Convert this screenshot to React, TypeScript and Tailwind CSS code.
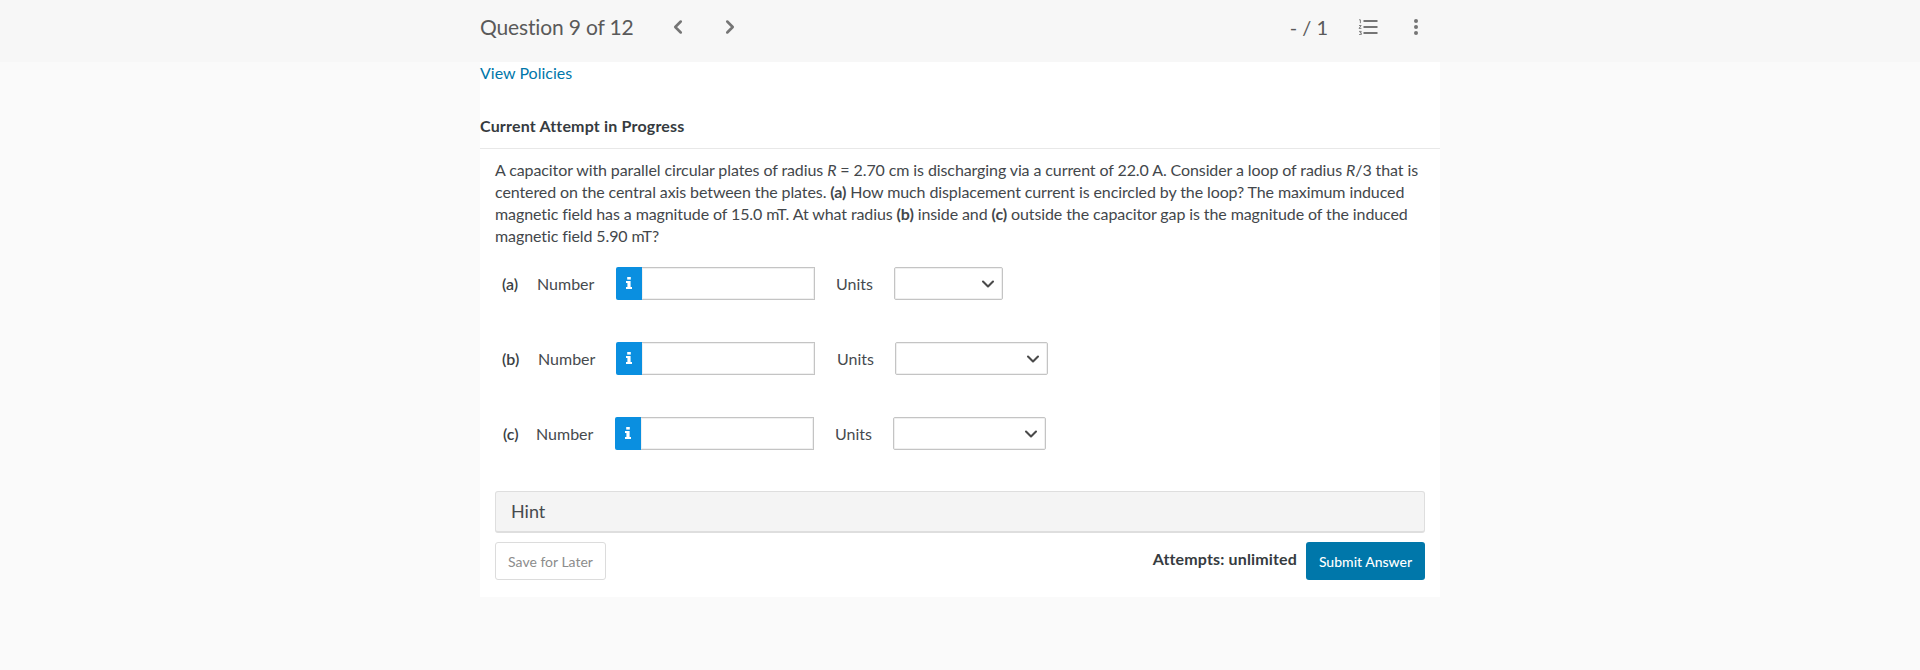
import { ChevronDown, ChevronLeft, ChevronRight } from "lucide-react";

function ListIcon() {
  return (
    <svg width="20" height="16" viewBox="0 0 20 16" className="text-[#757575]">
      <rect x="5.5" y="1" width="14" height="2" fill="currentColor" />
      <rect x="5.5" y="7" width="14" height="2" fill="currentColor" />
      <rect x="5.5" y="13" width="14" height="2" fill="currentColor" />
      <path d="M1 .8h1.4v3.4M1 6.5h2.2L1 9.4h2.4M1 12.4h2.3L2 13.8h1.3v1.8H1" fill="none" stroke="currentColor" strokeWidth="0.9" />
    </svg>
  );
}

function InfoIcon() {
  return (
    <svg width="6" height="12" viewBox="0 0 6 12" fill="white">
      <rect x="1.2" y="0" width="3.6" height="2.6" />
      <path d="M0 4h4.6v6H6v2H0v-2h1.4V6H0z" />
    </svg>
  );
}

function AnswerRow({ label, rowClass, labelClass, inputClass, unitsClass, selectClass }: { label: string; rowClass: string; labelClass: string; inputClass: string; unitsClass: string; selectClass: string }) {
  return (
    <div className={`flex h-[33px] items-center ${rowClass}`}>
      <span className={`font-semibold text-[#3a3f44] ${labelClass}`}>{label}</span>
      <span className="w-[58px] text-[#464a4e]">Number</span>
      <div className={`flex h-[33px] w-[199px] ${inputClass}`}>
        <span className="flex w-[26px] items-center justify-center rounded-l-[2px] bg-[#0a8fe0] pb-[2px]"><InfoIcon /></span>
        <div className="flex-1 border border-l-0 border-[#c4c4c4] bg-white shadow-[inset_0_0_0_1px_#f0f0f0]" />
      </div>
      <span className={`w-[58px] text-[#464a4e] ${unitsClass}`}>Units</span>
      <div className={`flex h-[33px] items-center justify-end rounded-[2px] border border-[#c4c4c4] bg-white pr-[4px] shadow-[inset_0_0_0_1px_#f0f0f0] ${selectClass}`}>
        <ChevronDown size={20} strokeWidth={2.5} className="text-[#4a4a4a]" />
      </div>
    </div>
  );
}

export default function App() {
  return (
    <div className="h-[670px] bg-[#fafafa] font-['Lato',sans-serif] text-[16px]">
      <header className="h-[62px] bg-[#f7f7f7]">
        <div className="mx-auto flex h-[53px] w-[960px] items-center text-[#757575]">
          <h1 className="w-[153px] text-[21px] tracking-[-0.15px] whitespace-nowrap text-[#5a5a5a]">Question 9 of 12</h1>
          <ChevronLeft size={22} strokeWidth={2.8} className="ml-[34px]" />
          <ChevronRight size={22} strokeWidth={2.8} className="ml-[30px]" />
          <span className="ml-auto text-[20px] text-[#5a5a5a]">- / 1</span>
          <span className="ml-[30px] mt-[1px]"><ListIcon /></span>
          <svg width="6" height="18" viewBox="0 0 6 18" className="ml-[35px] mr-[21px]">
            <circle cx="3" cy="3" r="2" fill="#757575" />
            <circle cx="3" cy="9" r="2" fill="#757575" />
            <circle cx="3" cy="15" r="2" fill="#757575" />
          </svg>
        </div>
      </header>

      <main className="mx-auto h-[535px] w-[960px] bg-white">
        <a className="block leading-[22px] text-[#0077aa]">View Policies</a>
        <h2 className="mt-[31px] border-b border-[#e8e8e8] pb-[11px] font-bold leading-[22px] tracking-[0.18px] text-[#363b40]">Current Attempt in Progress</h2>

        <p className="mx-[15px] mt-[10px] w-[930px] leading-[22px] tracking-[-0.1px] text-[#43474b]">
          A capacitor with parallel circular plates of radius <i>R</i> = 2.70 cm is discharging via a current of 22.0 A. Consider a loop of radius <i>R</i>/3 that is centered on the central axis between the plates. <b>(a)</b> How much displacement current is encircled by the loop? The maximum induced magnetic field has a magnitude of 15.0 mT. At what radius <b>(b)</b> inside and <b>(c)</b> outside the capacitor gap is the magnitude of the induced magnetic field 5.90 mT?
        </p>

        <AnswerRow label="(a)" rowClass="mt-[20px] ml-[22px]" labelClass="w-[35px]" inputClass="ml-[21px]" unitsClass="ml-[21px]" selectClass="w-[109px]" />
        <AnswerRow label="(b)" rowClass="mt-[42px] ml-[22px]" labelClass="w-[36px]" inputClass="ml-[20px]" unitsClass="ml-[22px]" selectClass="w-[153px]" />
        <AnswerRow label="(c)" rowClass="mt-[42px] ml-[23px]" labelClass="w-[33px]" inputClass="ml-[21px]" unitsClass="ml-[21px]" selectClass="w-[153px]" />

        <div className="mx-[15px] mt-[41px] flex h-[42px] items-center rounded-[3px] border border-b-2 border-[#dedede] bg-[#f4f4f4] px-[15px] text-[18px] text-[#464a4e]">Hint</div>

        <div className="mx-[15px] mt-[9px] flex items-center">
          <button className="h-[38px] w-[111px] rounded-[3px] border border-[#dcdcdc] bg-white text-[14px] text-[#8c8c8c]">Save for Later</button>
          <span className="ml-auto pb-[5px] font-bold tracking-[0.15px] text-[#363b40]">Attempts: unlimited</span>
          <button className="ml-[9px] h-[38px] w-[119px] rounded-[3px] bg-[#0077aa] text-[14px] font-medium text-white">Submit Answer</button>
        </div>
      </main>
    </div>
  );
}
